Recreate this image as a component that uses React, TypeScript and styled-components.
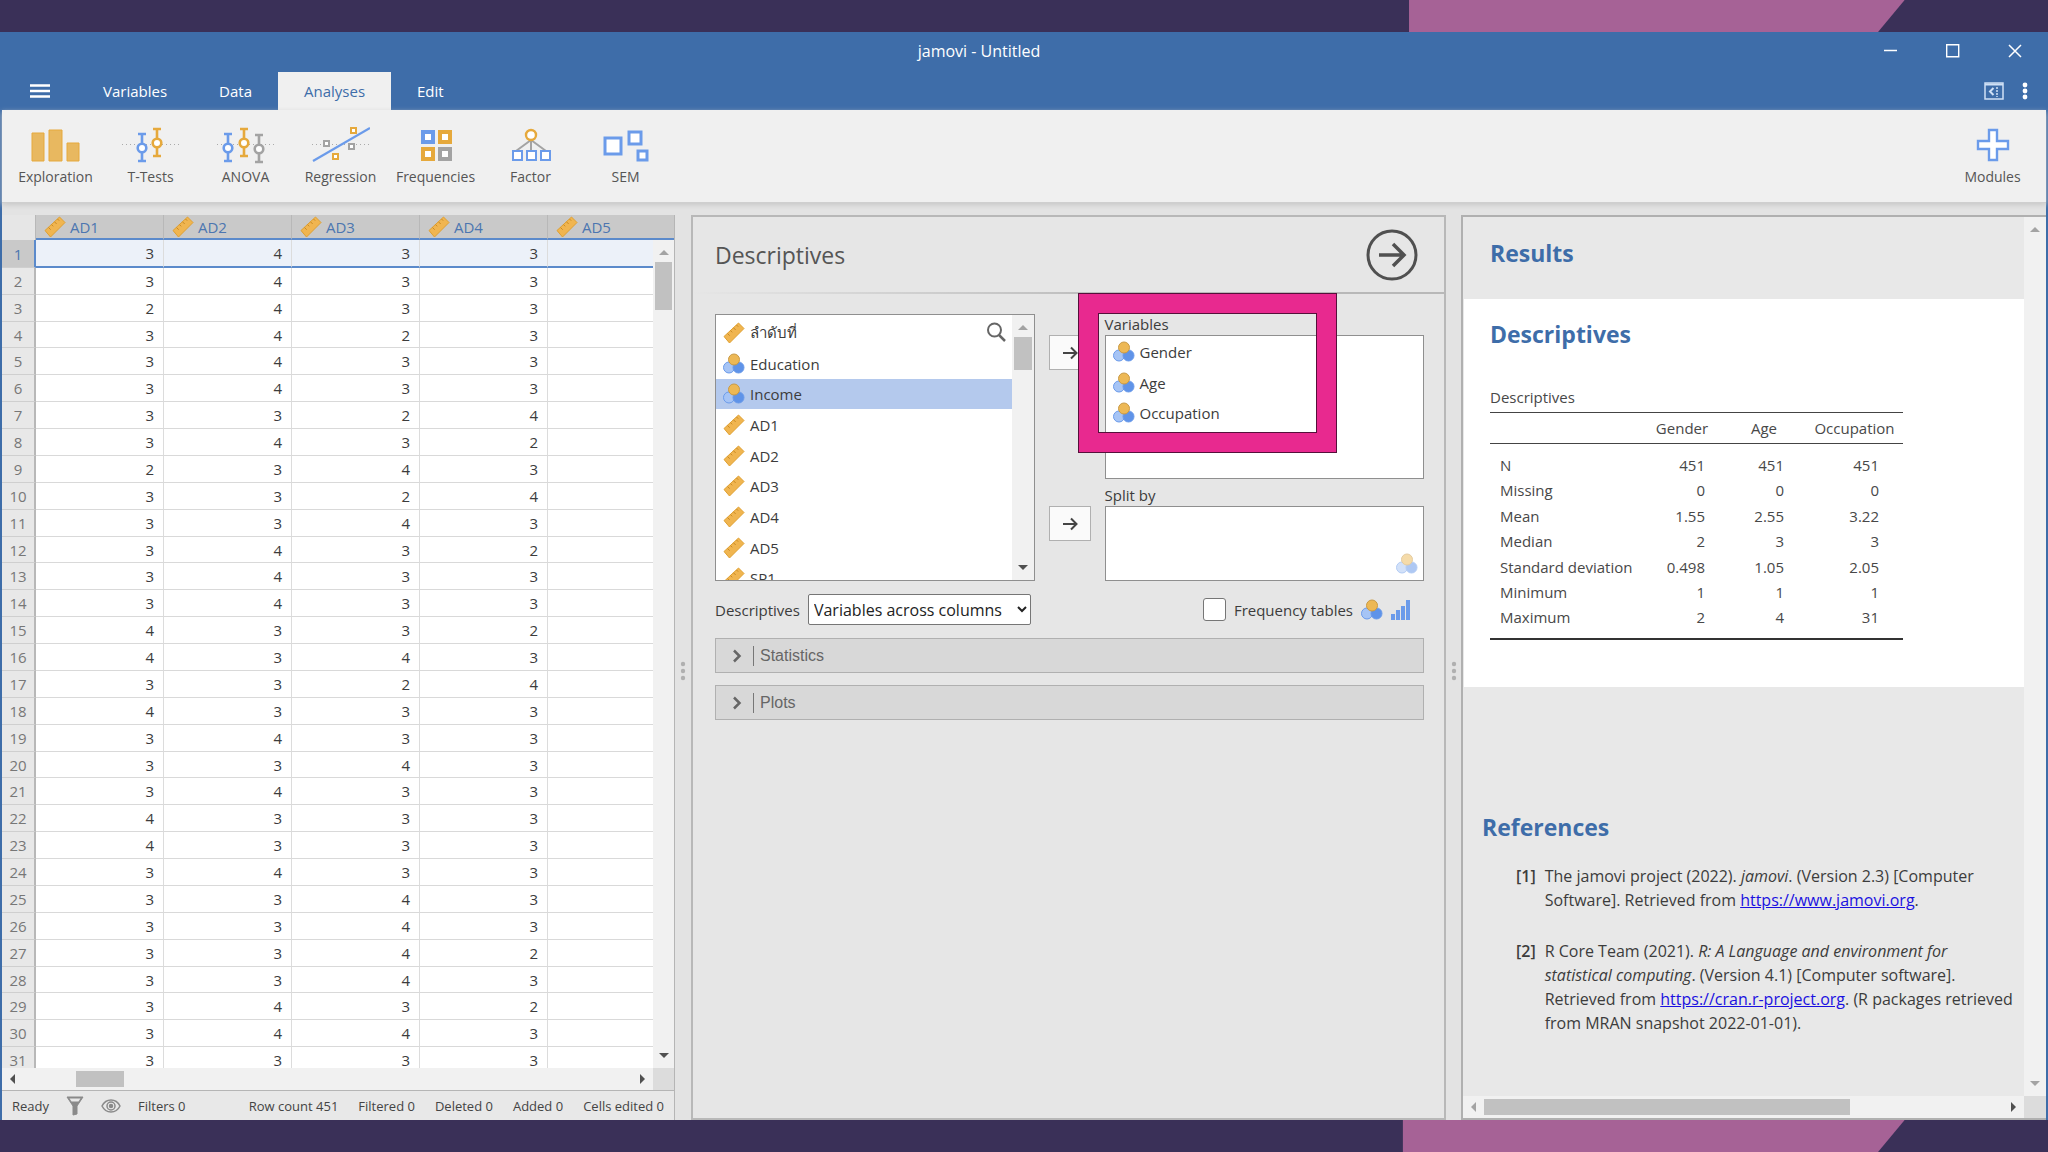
import React from 'react';
import styled, { createGlobalStyle } from 'styled-components';

const BLUE = '#3e6da9';
const ui = `"Open Sans", "Noto Sans", sans-serif`;

const Global = createGlobalStyle`
  * { box-sizing: border-box; }
  body { margin: 0; font-family: ${ui}; font-size: 15px; color: #3c3c3c; background: #3a3058; }
  button { font: inherit; color: inherit; padding: 0; border: 0; background: none; }
  h1, h2, h3, p, ul, ol { margin: 0; padding: 0; }
  svg { display: block; flex: none; }
`;

const Page = styled.div`
  display: flex;
  flex-direction: column;
  height: 100vh;
  overflow: hidden;
`;

const Stripe = styled.div`
  flex: 0 0 32px;
  background: #3a3058;
`;

const StripeShape = styled.div<{ $from: string; $slant: string }>`
  height: 100%;
  background: #a66296;
  clip-path: polygon(${p => p.$from} 0, ${p => p.$slant});
`;

const AppWindow = styled.main`
  flex: 1;
  min-height: 0;
  display: flex;
  flex-direction: column;
  background: #e3e3e3;
  border: solid ${BLUE};
  border-width: 0 2px;
`;

const TitleBar = styled.header`
  flex: 0 0 40px;
  display: grid;
  grid-template-columns: 1fr auto 1fr;
  align-items: center;
  padding-bottom: 2px;
  background: ${BLUE};
  color: #fff;
`;

const Title = styled.h1`
  grid-column: 2;
  padding-right: 90px;
  font-size: 16px;
  font-weight: 400;
`;

const WindowButtons = styled.div`
  display: flex;
  justify-content: flex-end;
`;

const WindowButton = styled.button`
  width: 62px;
  height: 38px;
  display: grid;
  place-items: center;
`;

const TabBar = styled.nav`
  flex: 0 0 38px;
  display: flex;
  align-items: stretch;
  background: ${BLUE};
  color: #fff;
`;

const MenuButton = styled.button`
  width: 75px;
  display: grid;
  place-items: center;
`;

const Tab = styled.button<{ $active?: boolean }>`
  padding: 0 26px;
  height: 38px;
  background: ${p => (p.$active ? '#f0f0f0' : 'transparent')};
  color: ${p => (p.$active ? BLUE : '#fff')};
`;

const TabTools = styled.div`
  margin-left: auto;
  padding-right: 18px;
  display: flex;
  align-items: center;
  gap: 18px;
`;

const Ribbon = styled.div`
  flex: 0 0 93px;
  display: flex;
  justify-content: space-between;
  padding: 0 6px;
  background: #f0f0f0;
  border-bottom: 1px solid #cfcfcf;
  box-shadow: 0 2px 5px #c8c8c8;
`;

const RibbonGroup = styled.div`
  display: flex;
`;

const RibbonButton = styled.button`
  width: 95px;
  padding-top: 16px;
  display: flex;
  flex-direction: column;
  align-items: center;
  gap: 3px;
  font-size: 14px;
  line-height: 20px;
  color: #555;
`;

const Workspace = styled.div`
  flex: 1;
  min-height: 0;
  margin-top: 12px;
  display: grid;
  grid-template-columns: minmax(0, 673fr) 16px minmax(0, 755fr) 15px minmax(0, 585fr);
`;

const Splitter = styled.div`
  display: grid;
  place-items: center;
  padding-top: 6px;
`;

const SheetPane = styled.section`
  display: flex;
  flex-direction: column;
  min-height: 0;
  border-right: 1px solid #b5b5b5;
`;

const SheetArea = styled.div`
  flex: 1;
  min-height: 0;
  overflow: hidden;
  display: grid;
  grid-template-columns: minmax(0, 1fr) 21px;
  grid-template-rows: 25px minmax(0, 1fr) 22px;
`;

const SheetClip = styled.div`
  grid-column: 1;
  grid-row: 1 / 3;
  overflow: hidden;
`;

const HeadFiller = styled.div`
  background: #c9c9c9;
  border-bottom: 2px solid #5b8acb;
`;

const SheetTable = styled.table`
  width: 100%;
  border-collapse: separate;
  border-spacing: 0;
  table-layout: fixed;
  font-size: 15px;
`;

const ColHead = styled.th`
  height: 25px;
  width: 128px;
  padding: 0 0 0 8px;
  background: #c9c9c9;
  border-right: 1px solid #b8b8b8;
  border-bottom: 2px solid #5b8acb;
  color: #4c76b0;
  font-weight: 400;
  text-align: left;
  &:last-child { width: auto; border-right: 0; }
`;

const Corner = styled.td`
  width: 34px;
  background: #e6e6e6;
  border-right: 1px solid #b8b8b8;
`;

const HeadLabel = styled.span`
  display: flex;
  align-items: center;
  gap: 4px;
  line-height: 22px;
`;

const SheetRow = styled.tr<{ $current: boolean }>`
  height: ${p => (p.$current ? 28 : 27)}px;
  &:nth-child(8n + 4) { height: 26px; }
  td {
    padding: 0 9px 0 0;
    line-height: 20px;
    text-align: right;
    background: ${p => (p.$current ? '#ecf1f9' : '#fff')};
    border-right: 1px solid #dcdcdc;
    border-bottom: ${p => (p.$current ? '2px solid #5b8acb' : '1px solid #d9d9d9')};
  }
  td:last-child { border-right: 0; }
  th {
    padding: 0;
    line-height: 20px;
    text-align: center;
    font-weight: 400;
    color: ${p => (p.$current ? '#4c76b0' : '#777')};
    background: ${p => (p.$current ? '#c9c9c9' : '#e8e8e8')};
    border-right: 2px solid ${p => (p.$current ? '#5b8acb' : '#b8b8b8')};
    border-bottom: 1px solid #cfcfcf;
  }
`;

const ScrollCorner = styled.div`
  background: #dcdcdc;
`;

const Bar = styled.div<{ $vertical?: boolean }>`
  display: flex;
  flex-direction: ${p => (p.$vertical ? 'column' : 'row')};
  align-items: center;
  justify-content: space-between;
  padding: ${p => (p.$vertical ? '8px 0' : '0 6px')};
  background: #f1f1f1;
`;

const Track = styled.div<{ $vertical?: boolean }>`
  flex: 1;
  display: flex;
  flex-direction: ${p => (p.$vertical ? 'column' : 'row')};
  align-self: stretch;
  padding: ${p => (p.$vertical ? '4px 2px' : '3px 10px')};
`;

const Thumb = styled.div<{ $before: number; $size: number; $vertical?: boolean }>`
  background: #c1c1c1;
  ${p => (p.$vertical ? `margin-top: ${p.$before}%; height: ${p.$size}px;` : `margin-left: ${p.$before}%; width: ${p.$size}%;`)}
`;

const StatusBar = styled.footer`
  flex: 0 0 30px;
  display: flex;
  align-items: center;
  padding: 0 10px;
  border-top: 1px solid #b5b5b5;
  background: #e8e8e8;
  font-size: 13px;
  color: #444;
  gap: 17px;
`;

const StatusCounts = styled.div`
  margin-left: auto;
  display: flex;
  gap: 20px;
`;

const OptionsPane = styled.section`
  border: 2px solid #b8b8b8;
  background: #e6e6e6;
  min-width: 0;
  overflow: hidden;
`;

const OptionsHead = styled.div`
  height: 77px;
  padding: 0 26px 0 22px;
  display: flex;
  align-items: center;
  justify-content: space-between;
  border-bottom: 2px solid;
  border-image: linear-gradient(to right, #e6e6e6, #b8b8b8 60%) 1;
`;

const OptionsTitle = styled.h2`
  font-size: 23px;
  font-weight: 400;
  color: #555;
`;

const OptionsBody = styled.div`
  padding: 20px 20px 0 22px;
  display: flex;
  flex-direction: column;
`;

const Assigner = styled.div`
  display: grid;
  grid-template-columns: minmax(0, 1fr) 42px minmax(0, 1fr);
  column-gap: 14px;
`;

const VariableList = styled.div`
  height: 267px;
  display: grid;
  grid-template-columns: minmax(0, 1fr) 22px;
  border: 1px solid #8f8f8f;
  background: #fff;
  overflow: hidden;
`;

const Items = styled.ul`
  position: relative;
  min-height: 0;
  padding-top: 2px;
  list-style: none;
  overflow: hidden;
`;

const Item = styled.li<{ $selected?: boolean }>`
  height: 31px;
  padding-left: 7px;
  display: flex;
  align-items: center;
  gap: 5px;
  background: ${p => (p.$selected ? '#b4c9ed' : 'transparent')};
  &:nth-child(3n) { height: 30px; }
`;

const SearchButton = styled.button`
  position: absolute;
  top: 6px;
  right: 5px;
`;

const Arrows = styled.div`
  display: flex;
  flex-direction: column;
  padding-top: 21px;
  gap: 136px;
`;

const MoveButton = styled.button`
  height: 35px;
  display: grid;
  place-items: center;
  border: 1px solid #b0b0b0;
  background: #fafafa;
`;

const Targets = styled.div`
  position: relative;
  display: flex;
  flex-direction: column;
`;

const TargetLabel = styled.h3<{ $top?: number }>`
  height: 21px;
  line-height: 20px;
  margin-top: ${p => p.$top ?? 0}px;
  font-size: 15px;
  font-weight: 400;
`;

const TargetBox = styled.div<{ $height: number }>`
  height: ${p => p.$height}px;
  padding: ${p => (p.$height > 100 ? '0' : '0 5px 5px 0')};
  display: flex;
  flex-direction: column;
  justify-content: ${p => (p.$height > 100 ? 'flex-start' : 'flex-end')};
  align-items: ${p => (p.$height > 100 ? 'stretch' : 'flex-end')};
  border: 1px solid #8f8f8f;
  background: #fff;
`;

const Highlight = styled.div`
  position: absolute;
  left: -27px;
  top: -21px;
  width: 259px;
  height: 160px;
  border: 1px solid #55103a;
  pointer-events: none;
  &::before {
    content: '';
    position: absolute;
    inset: 0;
    border: 19px solid #e8298f;
  }
  &::after {
    content: '';
    position: absolute;
    inset: 19px;
    border: 1px solid #55103a;
  }
`;

const SettingsRow = styled.div`
  display: flex;
  align-items: center;
  justify-content: space-between;
  height: 31px;
  margin: 13px 0;
  padding-right: 13px;
`;

const Field = styled.div`
  display: flex;
  align-items: center;
  gap: 8px;
`;

const Select = styled.select`
  width: 223px;
  height: 31px;
  padding: 0 0 0 1px;
  font: inherit;
  font-size: 16px;
  color: #222;
  background: #fff;
  border: 1px solid #767676;
  border-radius: 2px;
`;

const Check = styled.input`
  appearance: none;
  width: 23px;
  height: 23px;
  margin: 0;
  border: 1px solid #767676;
  border-radius: 3px;
  background: #fff;
`;

const Collapser = styled.button`
  height: 35px;
  margin-bottom: 12px;
  padding-left: 16px;
  display: flex;
  align-items: center;
  gap: 10px;
  border: 1px solid #b0b0b0;
  background: #d8d8d8;
  color: #666;
  font-family: "Liberation Sans", sans-serif;
  font-size: 16px;
`;

const CollapserText = styled.span`
  padding-left: 6px;
  line-height: 20px;
  border-left: 1px solid #777;
`;

const ResultsPane = styled.section`
  min-height: 0;
  display: grid;
  grid-template-columns: minmax(0, 1fr) 22px;
  grid-template-rows: minmax(0, 1fr) 22px;
  border: 1px solid #b0b0b0;
  border-width: 2px 0 2px 2px;
  background: #e8e8e8;
`;

const ResultsBody = styled.div`
  overflow: hidden;
  padding-left: 1px;
`;

const ResultsHead = styled.div`
  height: 82px;
  padding: 19px 0 0 26px;
`;

const Heading = styled.h2`
  font-size: 23px;
  line-height: 34px;
  font-weight: 700;
  color: ${BLUE};
`;

const Sheet = styled.article`
  height: 388px;
  padding: 18px 0 0 26px;
  background: #fff;
`;

const ResultTable = styled.table`
  width: 413px;
  margin-top: 36px;
  table-layout: fixed;
  border-collapse: collapse;
  border-bottom: 2px solid #333;
  font-size: 15px;
  color: #484848;
  caption { text-align: left; height: 25px; line-height: 20px; }
  thead th { height: 31px; padding: 0; border: solid #444; border-width: 1px 0; font-weight: 400; text-align: center; }
  tbody th { width: 152px; padding: 0 0 0 10px; font-weight: 400; text-align: left; white-space: nowrap; }
  tbody tr { height: 26px; }
  tbody tr:nth-child(2n) { height: 25px; }
  tbody tr:first-child { height: 34px; }
  tbody tr:last-child { height: 34px; }
  tbody tr:first-child > * { padding-top: 8px; }
  tbody tr:last-child > * { padding-bottom: 8px; }
  td { text-align: right; padding: 0; line-height: 20px; }
  th { line-height: 20px; }
  td:nth-child(2) { padding-right: 17px; }
  td:nth-child(3) { padding-right: 22px; }
  td:nth-child(4) { padding-right: 24px; }
`;

const Col = styled.col<{ $w: number }>`
  width: ${p => p.$w}px;
`;

const References = styled.div`
  padding: 123px 8px 0 18px;
`;

const RefList = styled.ol`
  padding: 20px 0 0 34px;
  list-style: none;
`;

const RefItem = styled.li`
  display: flex;
  gap: 9px;
  margin-bottom: 27px;
  font-size: 16px;
  line-height: 24px;
  a { color: #1a10e0; }
  b { font-weight: 600; }
`;

const Ruler = () => (
  <svg width="22" height="22" viewBox="0 0 22 22">
    <path d="M1 14.500 15.500 1 21 6.500 6.500 21Z" fill="#f0b550" stroke="#e0a030" strokeLinejoin="round" />
    <path d="m4.500 11.500 2.200 2.200M7.500 8.600l1.700 1.700M10.500 5.800l2.200 2.200M13.500 3l1.700 1.700" stroke="#c98a25" fill="none" />
  </svg>
);

const Nominal = ({ faded = false }) => (
  <svg width="22" height="22" viewBox="0 0 22 22" opacity={faded ? 0.5 : 1}>
    <circle cx="6" cy="14.500" r="5.500" fill="#a6c4f5" stroke="#6b9bea" />
    <circle cx="15.500" cy="14.500" r="5.500" fill="#5f93e8" stroke="#6b9bea" />
    <circle cx="11" cy="6.500" r="5.500" fill="#edb855" stroke="#c99a45" />
  </svg>
);

const Ordinal = () => (
  <svg width="20" height="22" viewBox="0 0 20 22" fill="#6b9bea">
    <path d="M0 15h4v6H0zM5 11h4v10H5zM10 7h4v14h-4zM15 1h4v20h-4z" />
  </svg>
);

const Tri = ({ dir, dim = false }: { dir: 'up' | 'down' | 'left' | 'right'; dim?: boolean }) => {
  const paths = { up: 'M0 7 5 2 10 7Z', down: 'M0 3 5 8 10 3Z', left: 'M7 0 2 5 7 10Z', right: 'M3 0 8 5 3 10Z' };
  return (
    <svg width="10" height="10" viewBox="0 0 10 10">
      <path d={paths[dir]} fill={dim ? '#a3a3a3' : '#505050'} />
    </svg>
  );
};

const Arrow = ({ size = 16, weight = 2 }) => (
  <svg width={size} height={size} viewBox="0 0 16 16" fill="none" stroke="#444" strokeWidth={weight}>
    <path d="M1 8h13M9 2.500 14.500 8 9 13.500" />
  </svg>
);

const Grip = () => (
  <svg width="6" height="20" viewBox="0 0 6 20" fill="#b0b0b0">
    {[3, 10, 17].map(y => (
      <circle key={y} cx="3" cy={y} r="2.200" />
    ))}
  </svg>
);

const A = '#e6a93c';
const B = '#6b9bea';
const G = '#a3a3a3';

const Whisker = ({ x, y, c }: { x: number; y: number; c: string }) => (
  <g stroke={c} fill="#f0f0f0" strokeWidth="2.600">
    <path d={`M${x - 4} ${y}h8M${x} ${y}v27M${x - 4} ${y + 27}h8`} />
    <circle cx={x} cy={y + 14} r="4.300" fill="#fff" />
  </g>
);

const Square = ({ x, y, s, c, w = 3 }: { x: number; y: number; s: number; c: string; w?: number }) => (
  <rect x={x} y={y} width={s} height={s} fill="#fff" stroke={c} strokeWidth={w} />
);

const Dots = () => <path d="M0 18.500H58" stroke="#aaa" strokeDasharray="1 3" />;

const ribbonArt: Record<string, React.ReactNode> = {
  Exploration: (
    <path d="M5 7h12v28H5zM22 4h13v31H22zM40 17h12v18H40z" fill="#e8b860" stroke={A} />
  ),
  'T-Tests': (<><Dots /><Whisker x={20} y={8} c={B} /><Whisker x={35} y={3} c={A} /></>),
  ANOVA: (<><Dots /><Whisker x={11} y={8} c={B} /><Whisker x={27} y={3} c={A} /><Whisker x={42} y={9} c={G} /></>),
  Regression: (
    <><Dots /><path d="M1 35 58 2" stroke={B} strokeWidth="2.200" />
      <Square x={39} y={2} s={5} c={A} w={2} /><Square x={12} y={15} s={5} c={G} w={2} />
      <Square x={37} y={18} s={5} c={G} w={2} /><Square x={21} y={28} s={5} c={A} w={2} /></>
  ),
  Frequencies: (
    <><Square x={16} y={6} s={10} c={B} w={4} /><Square x={33} y={6} s={10} c={A} w={4} />
      <Square x={16} y={23} s={10} c={A} w={4} /><Square x={33} y={23} s={10} c={G} w={4} /></>
  ),
  Factor: (
    <><path d="M29 14 14 25M29 14v11M29 14l15 11" stroke={G} strokeWidth="2" />
      <circle cx="29" cy="9" r="5" fill="#fff" stroke={A} strokeWidth="2.400" />
      <Square x={11} y={25} s={9} c={B} w={2} /><Square x={25} y={25} s={9} c={B} w={2} /><Square x={39} y={25} s={9} c={B} w={2} /></>
  ),
  SEM: (
    <><Square x={8} y={12} s={16} c={B} /><Square x={32} y={6} s={12} c={B} /><Square x={41} y={25} s={9} c={B} /></>
  ),
  Modules: (
    <path d="M25 4h8v11h11v8H33v11h-8V23H14v-8h11z" fill="#fff" stroke={B} strokeWidth="2.400" />
  ),
};

const RibbonItem = ({ name }: { name: string }) => (
  <RibbonButton>
    <svg width="58" height="38" viewBox="0 0 58 38" fill="none">{ribbonArt[name]}</svg>
    {name}
  </RibbonButton>
);

const rows = (
  '3433 3433 2433 3423 3433 3433 3324 3432 2343 3324 3343 3432 3433 3433 4332 4343 3324 4333 ' +
  '3433 3343 3433 4333 4333 3433 3343 3343 3342 3343 3432 3443 3333'
).split(' ').map(r => r.split(''));

const stats = [
  ['N', '451', '451', '451'],
  ['Missing', '0', '0', '0'],
  ['Mean', '1.55', '2.55', '3.22'],
  ['Median', '2', '3', '3'],
  ['Standard deviation', '0.498', '1.05', '2.05'],
  ['Minimum', '1', '1', '1'],
  ['Maximum', '2', '4', '31'],
];

const Chevron = () => (
  <svg width="11" height="14" viewBox="0 0 11 14" fill="none" stroke="#666" strokeWidth="2.500">
    <path d="m2 1.500 5.500 5.500L2 12.500" />
  </svg>
);

const DataPane = () => (
  <SheetPane>
    <SheetArea>
      <SheetClip>
        <SheetTable>
          <thead>
            <tr>
              <Corner />
              {['AD1', 'AD2', 'AD3', 'AD4', 'AD5'].map(h => (
                <ColHead key={h}><HeadLabel><Ruler />{h}</HeadLabel></ColHead>
              ))}
            </tr>
          </thead>
          <tbody>
            {rows.map((r, i) => (
              <SheetRow key={i} $current={i === 0}>
                <th>{i + 1}</th>
                {r.map((v, j) => <td key={j}>{v}</td>)}
                <td />
              </SheetRow>
            ))}
          </tbody>
        </SheetTable>
      </SheetClip>
      <HeadFiller />
      <Bar $vertical>
        <Tri dir="up" dim />
        <Track $vertical><Thumb $vertical $before={0} $size={48} /></Track>
        <Tri dir="down" />
      </Bar>
      <Bar>
        <Tri dir="left" />
        <Track><Thumb $before={8} $size={8} /></Track>
        <Tri dir="right" />
      </Bar>
      <ScrollCorner />
    </SheetArea>
    <StatusBar>
      <span>Ready</span>
      <svg width="18" height="20" viewBox="0 0 18 20">
        <path d="M1 1h16l-6 9v8l-4 1v-9Z" fill="#8a8a8a" stroke="#8a8a8a" />
        <path d="M3.500 2.500h11l-2 3h-7z" fill="#e8e8e8" />
      </svg>
      <svg width="20" height="14" viewBox="0 0 20 14" fill="none" stroke="#8a8a8a" strokeWidth="1.500">
        <path d="M1 7c4-8 14-8 18 0-4 8-14 8-18 0Z" />
        <circle cx="10" cy="7" r="4" /><circle cx="10" cy="7" r="1.500" fill="#8a8a8a" />
      </svg>
      <span>Filters 0</span>
      <StatusCounts>
        {['Row count 451', 'Filtered 0', 'Deleted 0', 'Added 0', 'Cells edited 0'].map(t => <span key={t}>{t}</span>)}
      </StatusCounts>
    </StatusBar>
  </SheetPane>
);

const Options = () => (
  <OptionsPane>
    <OptionsHead>
      <OptionsTitle>Descriptives</OptionsTitle>
      <button aria-label="Hide options">
        <svg width="52" height="52" viewBox="0 0 52 52" fill="none" stroke="#505050" strokeWidth="3">
          <circle cx="26" cy="26" r="24" />
          <path d="M13 26h25M27 15l11 11-11 11" strokeWidth="3.500" />
        </svg>
      </button>
    </OptionsHead>
    <OptionsBody>
      <Assigner>
        <VariableList>
          <Items>
            <Item><Ruler />ลำดับที่</Item>
            <Item><Nominal />Education</Item>
            <Item $selected><Nominal />Income</Item>
            {['AD1', 'AD2', 'AD3', 'AD4', 'AD5', 'SP1'].map(v => <Item key={v}><Ruler />{v}</Item>)}
            <SearchButton aria-label="Search variables">
              <svg width="22" height="22" viewBox="0 0 22 22" fill="none" stroke="#666" strokeWidth="2">
                <circle cx="9.500" cy="9" r="6.500" /><path d="m14 14 6 6" strokeWidth="2.500" />
              </svg>
            </SearchButton>
          </Items>
          <Bar $vertical>
            <Tri dir="up" dim />
            <Track $vertical><Thumb $vertical $before={0} $size={33} /></Track>
            <Tri dir="down" />
          </Bar>
        </VariableList>
        <Arrows>
          <MoveButton aria-label="Move to Variables"><Arrow /></MoveButton>
          <MoveButton aria-label="Move to Split by"><Arrow /></MoveButton>
        </Arrows>
        <Targets>
          <TargetLabel>Variables</TargetLabel>
          <TargetBox $height={144}>
            {['Gender', 'Age', 'Occupation'].map(v => <Item as="div" key={v}><Nominal />{v}</Item>)}
          </TargetBox>
          <TargetLabel $top={6}>Split by</TargetLabel>
          <TargetBox $height={75}><Nominal faded /></TargetBox>
          <Highlight />
        </Targets>
      </Assigner>
      <SettingsRow>
        <Field>
          <label htmlFor="layout">Descriptives</label>
          <Select id="layout"><option>Variables across columns</option></Select>
        </Field>
        <Field>
          <Check type="checkbox" id="freq" />
          <label htmlFor="freq">Frequency tables</label>
          <Nominal /><Ordinal />
        </Field>
      </SettingsRow>
      <Collapser><Chevron /><CollapserText>Statistics</CollapserText></Collapser>
      <Collapser><Chevron /><CollapserText>Plots</CollapserText></Collapser>
    </OptionsBody>
  </OptionsPane>
);

const Results = () => (
  <ResultsPane>
    <ResultsBody>
      <ResultsHead><Heading>Results</Heading></ResultsHead>
      <Sheet>
        <Heading>Descriptives</Heading>
        <ResultTable>
          <caption>Descriptives</caption>
          <colgroup><Col $w={152} /><Col $w={80} /><Col $w={84} /><Col $w={97} /></colgroup>
          <thead><tr><th /><th>Gender</th><th>Age</th><th>Occupation</th></tr></thead>
          <tbody>
            {stats.map(([name, ...vals]) => (
              <tr key={name}><th>{name}</th>{vals.map((v, i) => <td key={i}>{v}</td>)}</tr>
            ))}
          </tbody>
        </ResultTable>
      </Sheet>
      <References>
        <Heading>References</Heading>
        <RefList>
          <RefItem>
            <b>[1]</b>
            <p>The jamovi project (2022). <i>jamovi</i>. (Version 2.3) [Computer Software]. Retrieved from <a href="https://www.jamovi.org">https://www.jamovi.org</a>.</p>
          </RefItem>
          <RefItem>
            <b>[2]</b>
            <p>R Core Team (2021). <i>R: A Language and environment for statistical computing</i>. (Version 4.1) [Computer software]. Retrieved from <a href="https://cran.r-project.org">https://cran.r-project.org</a>. (R packages retrieved from MRAN snapshot 2022-01-01).</p>
          </RefItem>
        </RefList>
      </References>
    </ResultsBody>
    <Bar $vertical><Tri dir="up" dim /><Tri dir="down" dim /></Bar>
    <Bar>
      <Tri dir="left" dim />
      <Track><Thumb $before={-1} $size={72} /></Track>
      <Tri dir="right" />
    </Bar>
    <ScrollCorner />
  </ResultsPane>
);

export default function App() {
  return (
    <Page>
      <Global />
      <Stripe><StripeShape $from="68.8%" $slant="93% 0, 91.7% 100%, 68.8% 100%" /></Stripe>
      <AppWindow>
        <TitleBar>
          <Title>jamovi - Untitled</Title>
          <WindowButtons>
            <WindowButton aria-label="Minimise">
              <svg width="14" height="14" viewBox="0 0 14 14" stroke="#fff"><path d="M0 6.500h13" strokeWidth="1.500" /></svg>
            </WindowButton>
            <WindowButton aria-label="Maximise">
              <svg width="14" height="14" viewBox="0 0 14 14" stroke="#fff" fill="none"><path d="M.7.700h12v12H.7z" strokeWidth="1.400" /></svg>
            </WindowButton>
            <WindowButton aria-label="Close">
              <svg width="14" height="14" viewBox="0 0 14 14" stroke="#fff" fill="none"><path d="m1 1 12 12M13 1 1 13" strokeWidth="1.500" /></svg>
            </WindowButton>
          </WindowButtons>
        </TitleBar>
        <TabBar>
          <MenuButton aria-label="Menu">
            <svg width="20" height="14" viewBox="0 0 20 14" stroke="#fff" strokeWidth="2.500"><path d="M0 1.500h20M0 7h20M0 12.500h20" /></svg>
          </MenuButton>
          <Tab>Variables</Tab>
          <Tab>Data</Tab>
          <Tab $active>Analyses</Tab>
          <Tab>Edit</Tab>
          <TabTools>
            <button aria-label="Toggle panel">
              <svg width="20" height="18" viewBox="0 0 20 18" stroke="#cfe0f5" fill="none" strokeWidth="1.500">
                <path d="M1 1h18v16H1z" /><path d="M1 2.500h18" strokeWidth="2" /><path d="M9.500 6 6 9.500 9.500 13" strokeWidth="2" /><path d="M13 5v10" strokeDasharray="2 1" />
              </svg>
            </button>
            <button aria-label="More">
              <svg width="6" height="18" viewBox="0 0 6 18" fill="#fff"><circle cx="3" cy="3" r="2.400" /><circle cx="3" cy="9" r="2.400" /><circle cx="3" cy="15" r="2.400" /></svg>
            </button>
          </TabTools>
        </TabBar>
        <Ribbon>
          <RibbonGroup>
            {['Exploration', 'T-Tests', 'ANOVA', 'Regression', 'Frequencies', 'Factor', 'SEM'].map(n => <RibbonItem key={n} name={n} />)}
          </RibbonGroup>
          <RibbonItem name="Modules" />
        </Ribbon>
        <Workspace>
          <DataPane />
          <Splitter><Grip /></Splitter>
          <Options />
          <Splitter><Grip /></Splitter>
          <Results />
        </Workspace>
      </AppWindow>
      <Stripe><StripeShape $from="68.5%" $slant="93% 0, 91.7% 100%, 68.5% 100%" /></Stripe>
    </Page>
  );
}
